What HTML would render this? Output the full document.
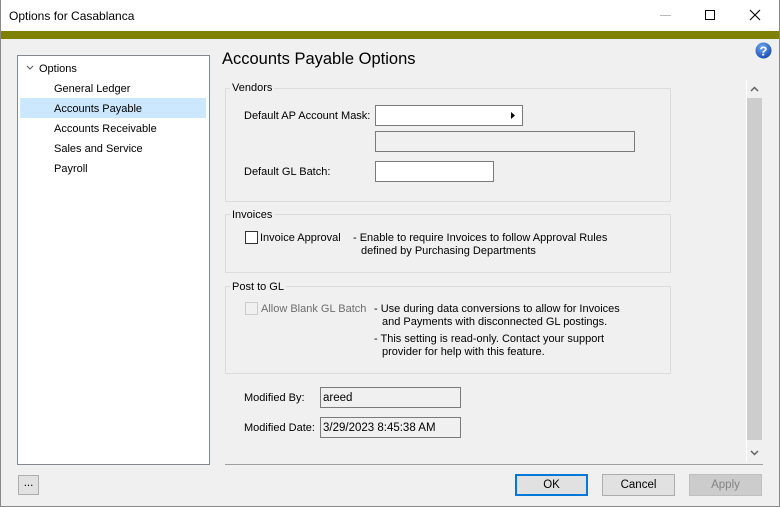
<!DOCTYPE html>
<html><head><style>
*{margin:0;padding:0;box-sizing:border-box}
body{width:780px;height:507px;background:#f0f0f0;font-family:"Liberation Sans",sans-serif;font-size:11px;color:#000;position:relative;overflow:hidden}
.a{position:absolute;white-space:nowrap}
.t{position:absolute;white-space:nowrap;margin-top:2px}
.box{position:absolute;border:1px solid #dcdcdc}
.lg{position:absolute;background:#f0f0f0;padding:0 2px;line-height:13px;margin-top:2px}
.inp{position:absolute;background:#fff;border:1px solid #7a7a7a}
.ro{position:absolute;background:#f0f0f0;border:1px solid #7a7a7a;padding-left:2px;line-height:21px;font-size:11.5px}
.btn{position:absolute;background:#e1e1e1;border:1px solid #adadad;text-align:center;line-height:22px;font-size:11.5px}
</style></head><body>
<div class="a" style="left:0;top:0;width:780px;height:31px;background:#fff"></div>
<div class="a" style="left:9px;top:9px;font-size:12px">Options for Casablanca</div>
<div class="a" style="left:660px;top:15px;width:11px;height:1px;background:#bbb"></div>
<div class="a" style="left:705px;top:10px;width:10px;height:10px;border:1px solid #000"></div>
<svg class="a" style="left:749px;top:9px" width="12" height="12"><path d="M1 1L11 11M11 1L1 11" stroke="#000" stroke-width="1.1"/></svg>
<div class="a" style="left:0;top:31px;width:780px;height:8px;background:#808000"></div>
<div class="a" style="left:0;top:0;width:780px;height:507px;border:1px solid #888;border-top:none"></div>
<svg class="a" style="left:755px;top:42px" width="17" height="17"><defs><radialGradient id="g" cx="40%" cy="30%" r="70%"><stop offset="0" stop-color="#6fa8ee"/><stop offset="1" stop-color="#1c4fb8"/></radialGradient></defs><circle cx="8.5" cy="8.5" r="8" fill="url(#g)"/><text x="8.5" y="13.5" text-anchor="middle" font-family="Liberation Sans" font-weight="bold" font-size="13" fill="#fff">?</text></svg>

<div class="a" style="left:17px;top:55px;width:193px;height:410px;background:#fff;border:1px solid #828790"></div>
<svg class="a" style="left:26px;top:65px" width="8" height="6"><path d="M1 1L4 4L7 1" stroke="#555" fill="none"/></svg>
<div class="t" style="left:39px;top:61px">Options</div>
<div class="a" style="left:20px;top:98px;width:186px;height:20px;background:#cce8ff"></div>
<div class="t" style="left:54px;top:81px">General Ledger</div>
<div class="t" style="left:54px;top:101px">Accounts Payable</div>
<div class="t" style="left:54px;top:121px">Accounts Receivable</div>
<div class="t" style="left:54px;top:141px">Sales and Service</div>
<div class="t" style="left:54px;top:161px">Payroll</div>

<div class="a" style="left:222px;top:50px;font-size:16.5px">Accounts Payable Options</div>

<div class="box" style="left:225px;top:88px;width:446px;height:114px"></div>
<div class="lg" style="left:230px;top:80px">Vendors</div>
<div class="t" style="left:244px;top:108px">Default AP Account Mask:</div>
<div class="inp" style="left:375px;top:105px;width:148px;height:21px"></div>
<svg class="a" style="left:511px;top:112px" width="5" height="7"><path d="M0 0L4 3.5L0 7Z" fill="#000"/></svg>
<div class="a" style="left:375px;top:131px;width:260px;height:21px;border:1px solid #7a7a7a"></div>
<div class="t" style="left:244px;top:164px">Default GL Batch:</div>
<div class="inp" style="left:375px;top:161px;width:119px;height:21px"></div>

<div class="box" style="left:225px;top:214px;width:446px;height:59px"></div>
<div class="lg" style="left:230px;top:207px">Invoices</div>
<div class="a" style="left:245px;top:231px;width:13px;height:13px;background:#fff;border:1px solid #333"></div>
<div class="t" style="left:260px;top:230px">Invoice Approval</div>
<div class="t" style="left:353px;top:230px">- Enable to require Invoices to follow Approval Rules</div>
<div class="t" style="left:361px;top:243px">defined by Purchasing Departments</div>

<div class="box" style="left:225px;top:286px;width:446px;height:88px"></div>
<div class="lg" style="left:230px;top:279px">Post to GL</div>
<div class="a" style="left:245px;top:302px;width:13px;height:13px;background:#f0f0f0;border:1px solid #ccc"></div>
<div class="t" style="left:261px;top:301px;color:#6d6d6d">Allow Blank GL Batch</div>
<div class="t" style="left:374px;top:301px">- Use during data conversions to allow for Invoices</div>
<div class="t" style="left:382px;top:314px">and Payments with disconnected GL postings.</div>
<div class="t" style="left:374px;top:331px">- This setting is read-only. Contact your support</div>
<div class="t" style="left:382px;top:344px">provider for help with this feature.</div>

<div class="t" style="left:244px;top:390px">Modified By:</div>
<div class="ro" style="left:320px;top:387px;width:141px;height:21px">areed</div>
<div class="t" style="left:244px;top:420px">Modified Date:</div>
<div class="ro" style="left:320px;top:417px;width:141px;height:21px">3/29/2023 8:45:38 AM</div>

<div class="a" style="left:746px;top:80px;width:17px;height:382px;background:#f0f0f0;border-left:1px solid #fff"></div>
<div class="a" style="left:747px;top:98px;width:15px;height:342px;background:#cdcdcd"></div>
<svg class="a" style="left:750px;top:86px" width="9" height="6"><path d="M1 5L4.5 1.5L8 5" stroke="#606060" stroke-width="1.5" fill="none"/></svg>
<svg class="a" style="left:750px;top:450px" width="9" height="6"><path d="M1 1L4.5 4.5L8 1" stroke="#606060" stroke-width="1.5" fill="none"/></svg>
<div class="a" style="left:225px;top:464px;width:538px;height:1px;background:#a0a0a0"></div>

<div class="btn" style="left:18px;top:475px;width:21px;height:20px;background:#e1e1e1;line-height:14px">...</div>
<div class="btn" style="left:515px;top:474px;width:73px;height:22px;border:2px solid #0078d7;line-height:18px">OK</div>
<div class="btn" style="left:602px;top:474px;width:73px;height:22px;line-height:20px">Cancel</div>
<div class="btn" style="left:689px;top:474px;width:73px;height:22px;line-height:20px;background:#ccc;border-color:#bfbfbf;color:#838383">Apply</div>
</body></html>
